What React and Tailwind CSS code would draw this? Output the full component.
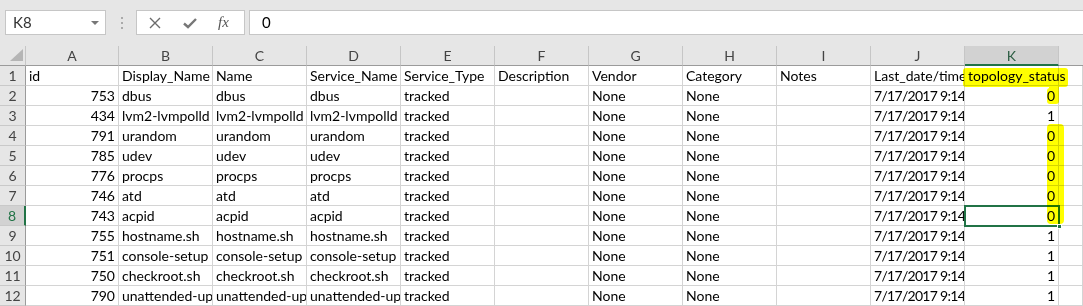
import React from "react";

const cols = ["A", "B", "C", "D", "E", "F", "G", "H", "I", "J", "K"];

const rows = [
  [753, "dbus", 0],
  [434, "lvm2-lvmpolld", 1],
  [791, "urandom", 0],
  [785, "udev", 0],
  [776, "procps", 0],
  [746, "atd", 0],
  [743, "acpid", 0],
  [755, "hostname.sh", 1],
  [751, "console-setup", 1],
  [750, "checkroot.sh", 1],
  [790, "unattended-upgrades", 1],
];

const header = [
  "id",
  "Display_Name",
  "Name",
  "Service_Name",
  "Service_Type",
  "Description",
  "Vendor",
  "Category",
  "Notes",
  "Last_date/time",
  "topology_status",
];

const grid = "grid grid-cols-[26px_93px_repeat(10,94px)_1fr]";

function Cell({ children, right, visible, tight }) {
  return (
    <div
      className={`h-[20px] border-r border-b border-[#d4d4d4] bg-white px-[3px] leading-[20px] whitespace-nowrap ${
        visible ? "overflow-visible relative z-10" : "overflow-hidden"
      } ${right ? "text-right" : ""} ${tight ? "tracking-[-0.7px]" : ""}`}
    >
      {children}
    </div>
  );
}

function RowHead({ n, selected }) {
  return (
    <div
      className={`h-[20px] border-b border-[#c9c9c9] text-center leading-[20px] ${
        selected
          ? "bg-[#d2d2d2] text-[#217346] border-r-2 border-r-[#217346]"
          : "bg-[#e6e6e6] text-[#444] border-r border-r-[#9b9b9b]"
      }`}
    >
      {n}
    </div>
  );
}

export default function App() {
  return (
    <div
      className="relative w-[1083px] h-[306px] overflow-hidden bg-[#e6e6e6] text-[14px] text-black"
      style={{ fontFamily: "Lato, 'Liberation Sans', sans-serif" }}
    >
      {/* formula bar */}
      <div className="flex items-center h-[46px] pt-[10px] pb-[11px] pl-[5px]">
        <div className="flex items-center justify-between w-[101px] h-[25px] bg-white border border-[#c6c6c6] pl-[7px] pr-[6px] text-[15px] text-[#333]">
          <span>K8</span>
          <span className="w-0 h-0 border-l-[4px] border-r-[4px] border-t-[4px] border-l-transparent border-r-transparent border-t-[#777]" />
        </div>
        <div className="flex flex-col gap-[3px] ml-[15px] mr-[13px]">
          <span className="w-[2px] h-[2px] bg-[#aaa]" />
          <span className="w-[2px] h-[2px] bg-[#aaa]" />
          <span className="w-[2px] h-[2px] bg-[#aaa]" />
        </div>
        <div className="flex items-center w-[109px] h-[25px] bg-white border border-[#c6c6c6] pl-[12px]">
          <svg width="12" height="12" viewBox="0 0 12 12" className="mr-[22px]">
            <path d="M1 1 L11 11 M11 1 L1 11" stroke="#6b6b6b" strokeWidth="1.4" fill="none" />
          </svg>
          <svg width="14" height="12" viewBox="0 0 14 12" className="mr-[21px]">
            <path d="M1 6.5 L5 10 L13 2" stroke="#777" strokeWidth="2.4" fill="none" />
          </svg>
          <span
            className="italic text-[15px] text-[#555]"
            style={{ fontFamily: "'Liberation Serif', serif" }}
          >
            fx
          </span>
        </div>
        <div className="flex items-center flex-1 h-[25px] ml-[4px] bg-white border border-[#c6c6c6] border-r-0 pl-[12px] text-[15px]">
          0
        </div>
      </div>

      {/* column headers */}
      <div className={grid}>
        <div className="relative h-[20px] bg-[#e6e6e6] border-r border-r-[#c6c6c6] border-b border-b-[#9b9b9b]">
          <span className="absolute left-[10px] bottom-[4px] w-0 h-0 border-l-[13px] border-b-[12px] border-l-transparent border-b-[#b5b5b5]" />
        </div>
        {cols.map((c) =>
          c === "K" ? (
            <div
              key={c}
              className="h-[20px] bg-[#d2d2d2] border-r border-r-[#c6c6c6] border-b-2 border-b-[#217346] text-center leading-[19px] text-[#2e5e44]"
            >
              {c}
            </div>
          ) : (
            <div
              key={c}
              className="h-[20px] bg-[#e6e6e6] border-r border-r-[#c6c6c6] border-b border-b-[#9b9b9b] text-center leading-[19px] text-[#444]"
            >
              {c}
            </div>
          )
        )}
        <div className="h-[20px] bg-[#e6e6e6] border-b border-b-[#9b9b9b]" />
      </div>

      {/* row 1 */}
      <div className={grid}>
        <RowHead n={1} />
        {header.map((h, i) => (
          <Cell key={h} visible={i === 10}>
            {h}
          </Cell>
        ))}
        <Cell />
      </div>

      {rows.map(([id, name, status], i) => (
        <div key={id} className={grid}>
          <RowHead n={i + 2} selected={i + 2 === 8} />
          <Cell right>{id}</Cell>
          <Cell>{name}</Cell>
          <Cell>{name}</Cell>
          <Cell>{name}</Cell>
          <Cell>tracked</Cell>
          <Cell />
          <Cell>None</Cell>
          <Cell>None</Cell>
          <Cell />
          <Cell tight>7/17/2017 9:14</Cell>
          <Cell right>{status}</Cell>
          <Cell />
        </div>
      ))}

      {/* selected cell K8 */}
      <div className="absolute left-[964px] top-[205px] w-[96px] h-[22px] border-2 border-[#217346] z-20" />
      <div className="absolute left-[1057px] top-[224px] w-[5px] h-[5px] bg-[#217346] border border-white z-20" />

      {/* highlighter marks */}
      <div className="absolute left-[963px] top-[68px] w-[105px] h-[19px] rounded-[3px] bg-[#ffff00] mix-blend-multiply z-30" />
      <div className="absolute left-[1049px] top-[86px] w-[10px] h-[4px] bg-[#ffff00] mix-blend-multiply z-30" />
      <div className="absolute left-[1047px] top-[88px] w-[12px] h-[16px] rounded-[3px] bg-[#ffff00] mix-blend-multiply z-30" />
      <div className="absolute left-[1047px] top-[124px] w-[17px] h-[100px] rounded-[4px] bg-[#ffff00] mix-blend-multiply z-30" />
    </div>
  );
}
